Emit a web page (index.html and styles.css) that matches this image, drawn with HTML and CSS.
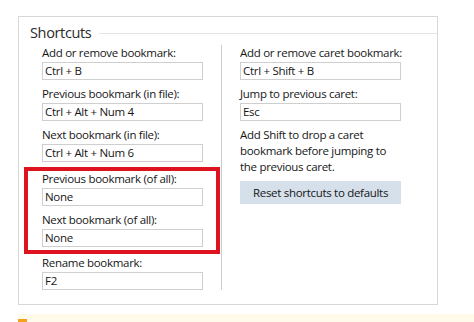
FILE: index.html
```html
<!DOCTYPE html>
<html>
<head>
<meta charset="utf-8">
<link rel="stylesheet" href="styles.css">
</head>
<body>
<div class="page">
  <div class="panel">
    <div class="legend"><span class="legend-text">Shortcuts</span><span class="legend-line"></span></div>
    <div class="cols">
      <div class="col col-left">
        <div class="label">Add or remove bookmark:</div>
        <div class="field">Ctrl + B</div>
        <div class="label">Previous bookmark (in file):</div>
        <div class="field">Ctrl + Alt + Num 4</div>
        <div class="label">Next bookmark (in file):</div>
        <div class="field field-last">Ctrl + Alt + Num 6</div>
        <div class="highlight">
          <div class="label">Previous bookmark (of all):</div>
          <div class="field">None</div>
          <div class="label">Next bookmark (of all):</div>
          <div class="field field-last">None</div>
        </div>
        <div class="label">Rename bookmark:</div>
        <div class="field field-last">F2</div>
      </div>
      <div class="col col-right">
        <div class="label">Add or remove caret bookmark:</div>
        <div class="field">Ctrl + Shift + B</div>
        <div class="label">Jump to previous caret:</div>
        <div class="field field-last">Esc</div>
        <p class="note">Add Shift to drop a caret bookmark before jumping to the previous caret.</p>
        <button class="reset">Reset shortcuts to defaults</button>
      </div>
    </div>
  </div>
  <div class="notice"><span class="notice-mark"></span></div>
</div>
</body>
</html>
```

FILE: styles.css
```css
html, body {
  margin: 0;
  padding: 0;
  background: #ffffff;
}
body {
  font-family: "Open Sans", "Noto Sans", sans-serif;
  color: #161616;
  width: 474px;
  height: 322px;
  overflow: hidden;
}
.page {
  padding: 16px 0 0 18px;
}
.panel {
  box-sizing: border-box;
  width: 420px;
  height: 289px;
  border: 1px solid #d8d8d8;
}
.legend {
  display: flex;
  align-items: center;
  height: 20px;
  padding: 6px 0 0 11px;
  margin-bottom: 2px;
}
.legend-text {
  font-size: 14.5px;
  line-height: 20px;
  letter-spacing: -0.35px;
  color: #2a2a2a;
}
.legend-line {
  flex: 1;
  height: 1px;
  background: #e4e4e4;
  margin-left: 8px;
}
.cols {
  display: flex;
}
.col-left {
  width: 161px;
  padding: 0 18px 0 23px;
  border-right: 1px solid #cdcdcd;
}
.col-right {
  width: 161px;
  padding-left: 18px;
}
.label {
  font-size: 11.5px;
  line-height: 15px;
  letter-spacing: -0.3px;
  white-space: nowrap;
}
.field {
  box-sizing: border-box;
  height: 18px;
  margin: 2px 0 6px;
  border: 1px solid #cfcfcf;
  padding: 0 2px;
  font-size: 11.5px;
  line-height: 16px;
  letter-spacing: -0.3px;
}
.field-last {
  margin-bottom: 0;
}
.highlight {
  margin: 5px -17px 1px -18px;
  border: 4px solid #dd1420;
  padding: 0 13px 3px 14px;
}
.note {
  margin: 6px 0 0;
  font-size: 11.5px;
  line-height: 16px;
  letter-spacing: -0.3px;
}
.reset {
  display: block;
  width: 161px;
  height: 23px;
  margin-top: 6px;
  border: none;
  background: #d5e0eb;
  font-family: "Open Sans", "Noto Sans", sans-serif;
  font-size: 11.5px;
  letter-spacing: -0.3px;
  color: #161616;
  padding: 0;
}
.notice {
  margin-top: 9px;
  height: 9px;
  background: #fffaea;
  display: flex;
  align-items: flex-end;
}
.notice-mark {
  width: 9px;
  height: 4px;
  background: #f4a21c;
}
```
